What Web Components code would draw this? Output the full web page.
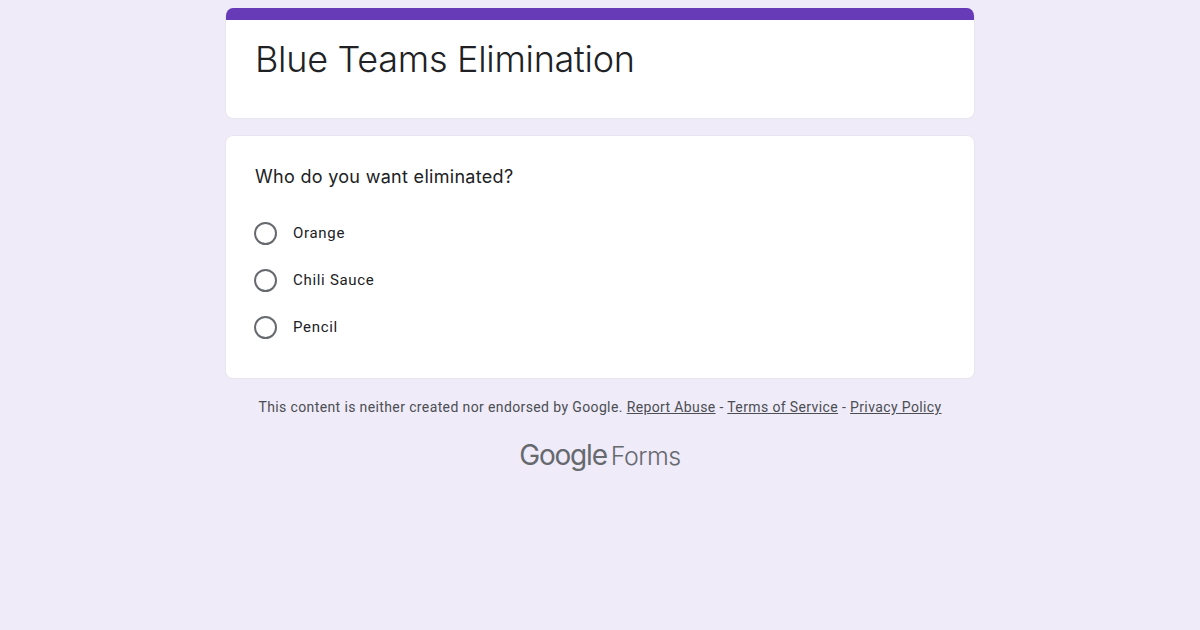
<!DOCTYPE html>
<html>
<head>
<meta charset="utf-8">
<title>Blue Teams Elimination</title>
<style>
  html, body { margin: 0; height: 100%; }
  body { background: #efebf9; font-family: Roboto, "Liberation Sans", sans-serif; }
</style>
</head>
<body>
<form-page>
  <form-header slot="header">Blue Teams Elimination</form-header>
  <form-question question="Who do you want eliminated?">
    <form-option>Orange</form-option>
    <form-option>Chili Sauce</form-option>
    <form-option>Pencil</form-option>
  </form-question>
  <form-footer></form-footer>
</form-page>
<script>
class FormPage extends HTMLElement {
  connectedCallback() {
    this.attachShadow({ mode: 'open' });
    this.shadowRoot.innerHTML = `
      <style>
        :host {
          display: flex;
          flex-direction: column;
          gap: 16px;
          width: 750px;
          margin: 0 auto;
          padding-top: 8px;
        }
      </style>
      <slot name="header"></slot>
      <slot></slot>
    `;
  }
}
class FormHeader extends HTMLElement {
  connectedCallback() {
    this.attachShadow({ mode: 'open' });
    this.shadowRoot.innerHTML = `
      <style>
        :host {
          display: block;
          height: 111px;
          box-sizing: border-box;
          background: #fff;
          border: 1px solid #e8e5ee;
          border-top: 0;
          border-radius: 8px;
          overflow: hidden;
        }
        .accent { height: 12px; margin: 0 -1px; background: #673ab7; }
        h1 {
          margin: 0;
          padding: 16px 0 0 29px;
          font: 350 36px/47px Inter, Roboto, sans-serif;
          letter-spacing: -0.28px;
          color: #202124;
        }
      </style>
      <div class="accent"></div>
      <h1><slot></slot></h1>
    `;
  }
}
class FormQuestion extends HTMLElement {
  connectedCallback() {
    this.attachShadow({ mode: 'open' });
    this.shadowRoot.innerHTML = `
      <style>
        :host {
          display: block;
          height: 244px;
          box-sizing: border-box;
          padding: 29px 29px 0;
          background: #fff;
          border: 1px solid #e8e5ee;
          border-radius: 8px;
        }
        .title {
          font: 400 18px/24px Inter, Roboto, sans-serif;
          letter-spacing: 0.3px;
          color: #202124;
        }
        .list { display: flex; flex-direction: column; gap: 23px; margin-top: 32px; }
      </style>
      <div class="title">${this.getAttribute('question')}</div>
      <div class="list"><slot></slot></div>
    `;
  }
}
class FormOption extends HTMLElement {
  connectedCallback() {
    this.attachShadow({ mode: 'open' });
    this.shadowRoot.innerHTML = `
      <style>
        :host {
          display: flex;
          align-items: center;
          gap: 16px;
          height: 24px;
          font: 400 15px/24px Roboto, sans-serif;
          letter-spacing: 0.7px;
          color: #202124;
        }
        .radio {
          width: 23px;
          height: 23px;
          margin-left: -1px;
          box-sizing: border-box;
          border: 2px solid #66696e;
          border-radius: 50%;
        }
      </style>
      <span class="radio"></span>
      <span><slot></slot></span>
    `;
  }
}
class FormFooter extends HTMLElement {
  connectedCallback() {
    this.attachShadow({ mode: 'open' });
    this.shadowRoot.innerHTML = `
      <style>
        :host {
          display: flex;
          flex-direction: column;
          align-items: center;
          padding-top: 3px;
          color: #5f6368;
        }
        .legal { font: 400 14px/18px Roboto, sans-serif; letter-spacing: 0.38px; white-space: nowrap; color: #4b4e52; }
        a { color: inherit; }
        .brand { display: flex; align-items: baseline; gap: 4px; margin-top: 22px; color: #66696e; }
        .google { font: 400 28px/34px Inter, Roboto, sans-serif; letter-spacing: -1.2px; }
        .forms { font: 350 25px/34px Inter, Roboto, sans-serif; letter-spacing: -0.5px; }
      </style>
      <div class="legal">This content is neither created nor endorsed by Google. <a href="#">Report Abuse</a> - <a href="#">Terms of Service</a> - <a href="#">Privacy Policy</a></div>
      <div class="brand"><span class="google">Google</span><span class="forms">Forms</span></div>
    `;
  }
}
customElements.define('form-page', FormPage);
customElements.define('form-header', FormHeader);
customElements.define('form-question', FormQuestion);
customElements.define('form-option', FormOption);
customElements.define('form-footer', FormFooter);
</script>
</body>
</html>
